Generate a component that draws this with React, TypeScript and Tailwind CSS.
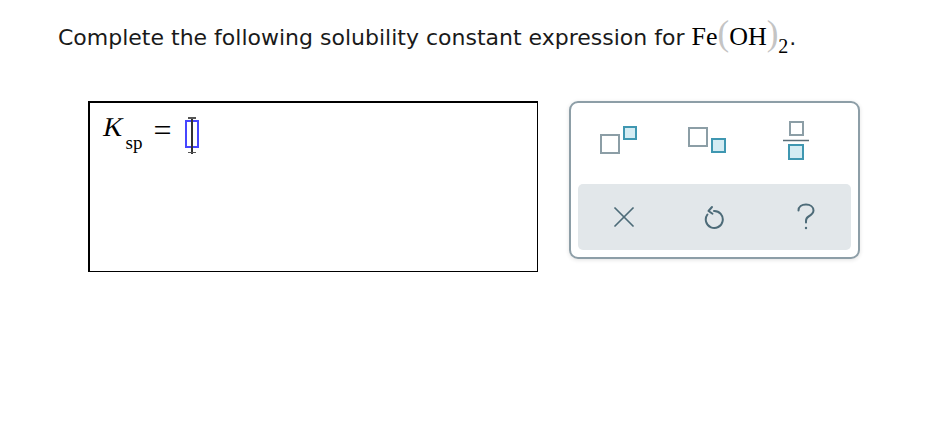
import { X } from 'lucide-react';

const iconColor = '#4d6b78';

function SuperscriptIcon() {
    return (
        <svg width="91" height="81" viewBox="0 0 91 81">
            <rect x="23" y="32" width="18" height="18" fill="#fff" stroke="#8c9ea6" strokeWidth="2" />
            <rect x="46" y="24" width="12" height="12" fill="#d4ecf3" stroke="#3f97b1" strokeWidth="2" />
        </svg>
    );
}

function SubscriptIcon() {
    return (
        <svg width="91" height="81" viewBox="0 0 91 81">
            <rect x="20" y="25" width="18" height="18" fill="#fff" stroke="#8c9ea6" strokeWidth="2" />
            <rect x="43" y="36" width="13" height="13" fill="#d4ecf3" stroke="#3f97b1" strokeWidth="2" />
        </svg>
    );
}

function FractionIcon() {
    return (
        <svg width="91" height="81" viewBox="0 0 91 81">
            <rect x="30" y="19" width="13" height="13" fill="#fff" stroke="#8c9ea6" strokeWidth="2" />
            <line x1="23" y1="37.5" x2="49" y2="37.5" stroke="#5a6e78" strokeWidth="1.5" />
            <rect x="29" y="42" width="14" height="14" fill="#d4ecf3" stroke="#3f97b1" strokeWidth="2" />
        </svg>
    );
}

function UndoIcon() {
    return (
        <svg width="22" height="25" viewBox="0 0 22 25" fill="none" stroke={iconColor} strokeWidth="2" strokeLinecap="round" strokeLinejoin="round">
            <path d="M10 6 A8.5 8.5 0 1 1 3.4 9.5" />
            <path d="M8 2 L4.5 6 L8.5 8.8" />
        </svg>
    );
}

function HelpIcon() {
    return (
        <svg width="20" height="28" viewBox="0 0 20 28" fill="none" stroke={iconColor} strokeWidth="2" strokeLinecap="round">
            <path d="M2.5 7.5 C2.5 3.5 5.8 1.5 10 1.5 C14.3 1.5 17.5 4 17.5 7.6 C17.5 10.8 15 12.2 12.6 13.5 C10.7 14.5 10 15.6 10 18 L10 19.5" />
            <circle cx="10" cy="25" r="1.2" fill={iconColor} stroke="none" />
        </svg>
    );
}

export default function App() {
    return (
        <div className="bg-white w-[950px] h-[422px] overflow-hidden">
            <div className="h-[50px] pl-[58px] pt-[16px] text-[22px] leading-[30px] text-[#1a1a1a] flex items-baseline" style={{ fontFamily: 'Verdana, "DejaVu Sans", sans-serif' }}>
                <span>Complete the following solubility constant expression for&nbsp;</span>
                <span className="text-[26px] text-black" style={{ fontFamily: '"Liberation Serif", serif' }}>
                    Fe<span className="text-[#c4c4c4] text-[35px] leading-none">(</span>OH<span className="text-[#c4c4c4] text-[35px] leading-none">)</span><sub className="text-[20px] relative top-[8px]">2</sub>
                </span>
                <span className="ml-[1px]">.</span>
            </div>

            <div className="flex items-start pl-[88px] pt-[51px] gap-[31px]">
                <div className="w-[450px] h-[171px] border-t-2 border-l-2 border-r border-b border-black">
                    <div className="flex items-start pl-[14px] pt-[9px]" style={{ fontFamily: '"Liberation Serif", serif' }}>
                        <span className="inline-block -skew-x-12 text-[27px] leading-[30px]">K</span>
                        <span className="text-[19px] leading-[22px] mt-[20px] ml-[2px]">sp</span>
                        <span className="text-[32px] leading-[30px] ml-[11px] mt-[3px]">=</span>
                        <div className="relative ml-[14px] mt-[8px] w-[14px] h-[28px] border-2 border-[#4646ff]">
                            <div className="absolute left-[4px] -top-[4px] w-[2px] h-[36px] bg-[#333]" />
                            <div className="absolute left-[1px] -top-[5px] w-[8px] h-[1.5px] bg-[#555]" />
                            <div className="absolute left-[1px] -bottom-[7px] w-[8px] h-[1.5px] bg-[#555]" />
                        </div>
                    </div>
                </div>

                <div className="w-[291px] h-[158px] border-2 border-[#8d9ea7] rounded-[9px] px-[7px] pb-[7px] shadow-[0_1px_4px_rgba(0,0,0,0.12)] flex flex-col">
                    <div className="grid grid-cols-3 h-[81px]">
                        <SuperscriptIcon />
                        <SubscriptIcon />
                        <FractionIcon />
                    </div>
                    <div className="grid grid-cols-3 h-[66px] bg-[#e2e7ea] rounded-[5px]">
                        <div className="flex items-center justify-center">
                            <X size={36} strokeWidth={1.15} color={iconColor} />
                        </div>
                        <div className="flex items-center justify-center">
                            <UndoIcon />
                        </div>
                        <div className="flex items-center justify-center">
                            <HelpIcon />
                        </div>
                    </div>
                </div>
            </div>
        </div>
    );
}
